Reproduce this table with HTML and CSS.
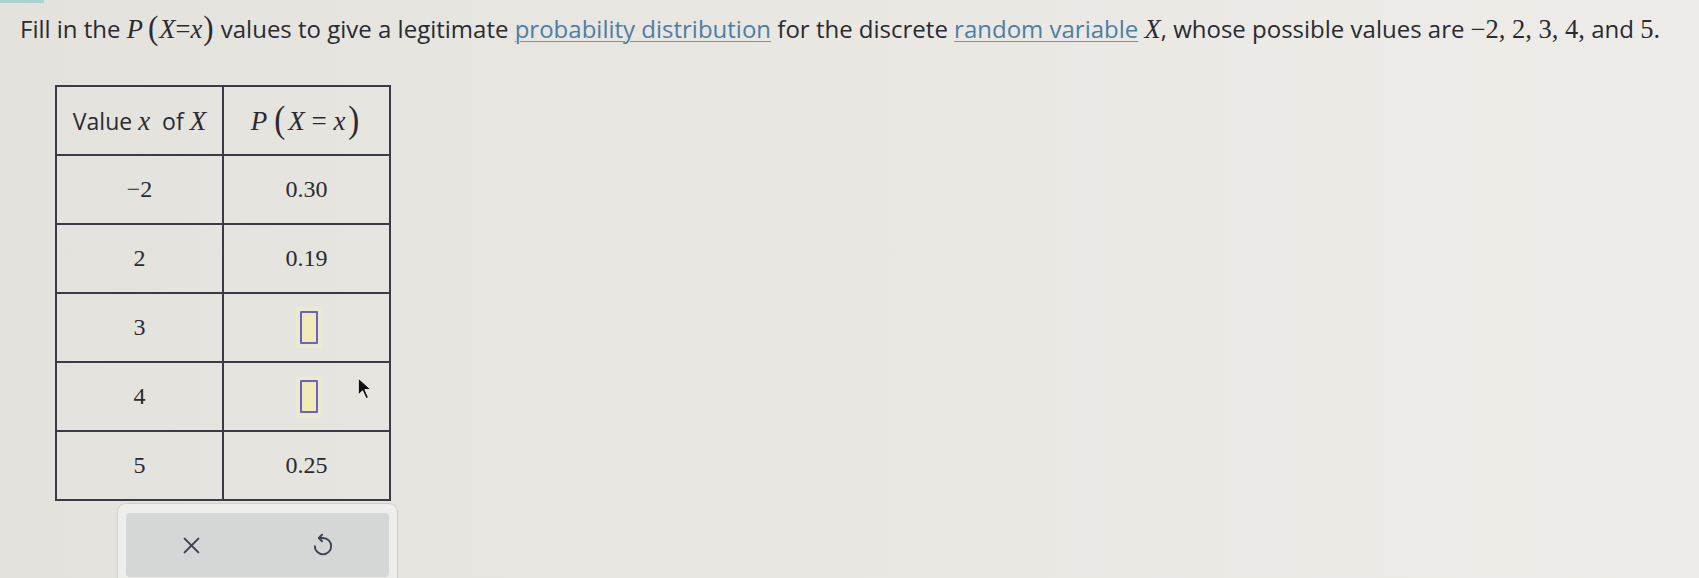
FILE: index.html
```html
<!DOCTYPE html>
<html lang="en">
<head>
<meta charset="utf-8">
<title>Probability distribution</title>
<link rel="stylesheet" href="styles.css">
</head>
<body>
<div class="page">
  <div class="top-tab"></div>
  <p class="question">Fill in the <span class="m"><i class="pv">P</i><span class="pp">(</span><i>X</i>=<i>x</i><span class="pp">)</span></span> values to give a legitimate <a class="term" href="#">probability distribution</a> for the discrete <a class="term" href="#">random variable</a> <span class="m"><i>X</i></span>, whose possible values are <span class="m">−2, 2, 3, 4,</span> and <span class="m">5.</span></p>

  <table class="dist">
    <thead>
      <tr>
        <th>Value <span class="m"><i>x</i></span>&nbsp; of <span class="m"><i>X</i></span></th>
        <th><span class="m"><i class="pv">P</i><span class="pp">(</span><i>X</i> = <i>x</i><span class="pp">)</span></span></th>
      </tr>
    </thead>
    <tbody>
      <tr><td>−2</td><td>0.30</td></tr>
      <tr><td>2</td><td>0.19</td></tr>
      <tr><td>3</td><td><span class="blank"><span class="box"></span></span></td></tr>
      <tr><td>4</td><td class="has-cursor"><span class="blank"><span class="box"></span></span>
        <svg class="cursor" width="17" height="24" viewBox="0 0 14 20"><path d="M1 1 L1 15 L4.5 11.5 L7.5 18 L9.5 17 L6.5 10.5 L11.5 10.5 Z" fill="#111" stroke="#f2f2f2" stroke-width="0.8"/></svg></td></tr>
      <tr><td>5</td><td>0.25</td></tr>
    </tbody>
  </table>

  <div class="tools">
    <div class="tools-inner">
      <button class="tool" aria-label="Clear">
        <svg width="19" height="19" viewBox="0 0 18 18"><path d="M2.5 2.5 L15.5 15.5 M15.5 2.5 L2.5 15.5" stroke="#3b4250" stroke-width="1.9" stroke-linecap="round" fill="none"/></svg>
      </button>
      <button class="tool" aria-label="Undo">
        <svg width="28" height="28" viewBox="0 0 24 24"><path d="M9 6 H12 A7 7 0 1 1 5 13" stroke="#3b4250" stroke-width="1.6" fill="none" stroke-linecap="round"/><path d="M11.2 3.2 L8.4 6 L11.2 8.8" stroke="#3b4250" stroke-width="1.6" fill="none" stroke-linecap="round" stroke-linejoin="round"/></svg>
      </button>
    </div>
  </div>
</div>
</body>
</html>
```

FILE: styles.css
```css
html, body {
  margin: 0;
  padding: 0;
  height: 100%;
}
body {
  background: linear-gradient(90deg, #e3e2dd 0%, #e8e7e2 45%, #eeece8 100%);
  color: #2a2b31;
  font-family: "Open Sans", "Liberation Sans", sans-serif;
  overflow: hidden;
}
.page {
  position: relative;
  padding: 0 0 0 20px;
}
.top-tab {
  position: absolute;
  left: 0;
  top: 0;
  width: 44px;
  height: 3px;
  background: #a9d3cf;
}
.question {
  margin: 0;
  padding-top: 13px;
  font-size: 24px;
  line-height: 32px;
  white-space: nowrap;
}
.m {
  font-family: "Liberation Serif", "DejaVu Serif", serif;
  font-size: 26.5px;
}
.m i {
  font-style: italic;
}
.pp {
  display: inline-block;
  font-size: 31px;
  line-height: 20px;
  transform: scaleY(1.12);
  margin: 0 1px;
}
.pv {
  margin-right: 4px;
}
.term {
  color: #4e7ea3;
  text-decoration: underline;
  text-decoration-color: #6f95b3;
  text-underline-offset: 3px;
  text-decoration-thickness: 1px;
}
.dist {
  margin: 40px 0 0 35px;
  border-collapse: collapse;
  width: 336px;
  table-layout: fixed;
}
.dist th, .dist td {
  border: 2px solid #3c3a44;
  height: 67px;
  padding: 0;
  text-align: center;
  vertical-align: middle;
}
.dist th {
  font-weight: 400;
  font-size: 23px;
}
.dist th:first-child, .dist td:first-child {
  width: 165px;
}
.dist th .m {
  font-size: 27px;
}
.dist th .pp {
  font-size: 33px;
  margin: 0 3px;
  transform: scaleY(1.18);
}
.dist td {
  font-family: "Liberation Serif", "DejaVu Serif", serif;
  font-size: 24px;
}
.blank {
  display: inline-block;
  padding: 4px;
  margin-left: 4px;
  background: #ebe9cf;
  vertical-align: middle;
  line-height: 0;
}
.box {
  display: inline-block;
  width: 14px;
  height: 29px;
  border: 2px solid #6b62c2;
  background: #efeab6;
  border-radius: 1px;
}
.has-cursor {
  position: relative;
}
.cursor {
  position: absolute;
  left: 133px;
  top: 14px;
}
.tools {
  margin: 2px 0 0 97px;
  width: 263px;
  padding: 9px 8px 0 8px;
  border: 1px solid #cfcfcc;
  border-bottom: none;
  border-radius: 9px 9px 0 0;
  background: #eeeeeb;
  height: 80px;
}
.tools-inner {
  display: flex;
  height: 64px;
  background: #d4d7d6;
  border-radius: 4px;
}
.tool {
  flex: 1;
  border: none;
  background: transparent;
  display: flex;
  align-items: center;
  justify-content: center;
  padding: 0;
  cursor: pointer;
}
```
